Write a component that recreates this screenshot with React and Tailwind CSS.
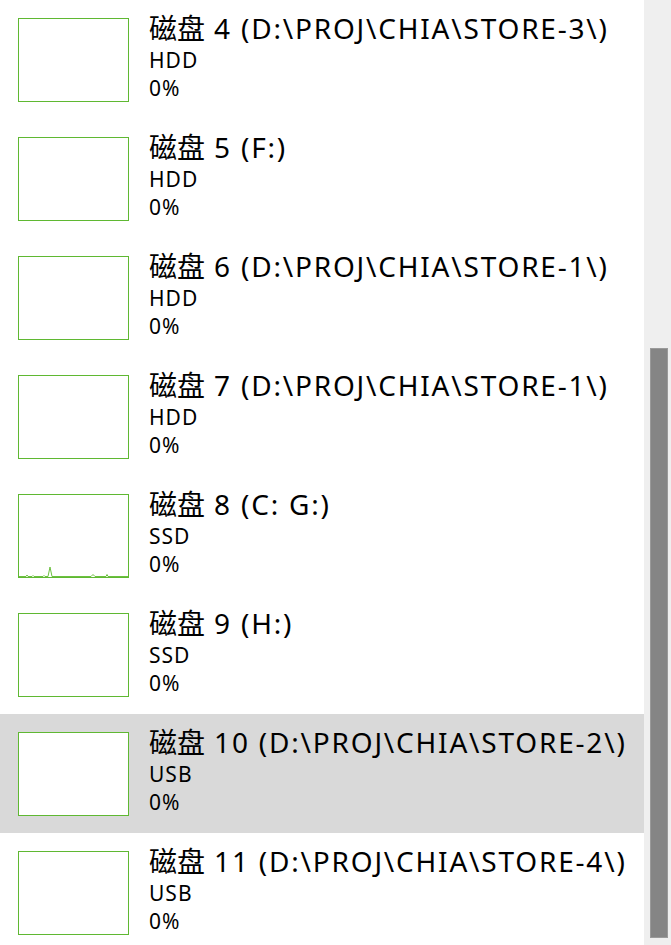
import React from "react";

const disks = [
  { n: 4, label: "D:\\PROJ\\CHIA\\STORE-3\\", type: "HDD" },
  { n: 5, label: "F:", type: "HDD" },
  { n: 6, label: "D:\\PROJ\\CHIA\\STORE-1\\", type: "HDD" },
  { n: 7, label: "D:\\PROJ\\CHIA\\STORE-1\\", type: "HDD" },
  { n: 8, label: "C: G:", type: "SSD", spikes: true },
  { n: 9, label: "H:", type: "SSD" },
  { n: 10, label: "D:\\PROJ\\CHIA\\STORE-2\\", type: "USB", selected: true },
  { n: 11, label: "D:\\PROJ\\CHIA\\STORE-4\\", type: "USB" },
];

function Graph({ spikes }) {
  return (
    <div className="w-[111px] h-[84px] border border-[#5fb832] bg-white shrink-0">
      {spikes && (
        <svg width="109" height="82" viewBox="0 0 109 82" className="block">
          <polyline
            fill="none"
            stroke="#6cc040"
            strokeWidth="1"
            points="0,81.5 7,81.5 8,80 9,81.5 13,81.5 14,80.5 15,81.5 24,81.5 25,80.5 26,81.5 29,81.5 31,72 33,81.5 72,81.5 74,79.5 76,81.5 87,81.5 88,79.5 89,81.5 109,81.5"
          />
        </svg>
      )}
    </div>
  );
}

function DiskRow({ disk }) {
  return (
    <div
      className={`h-[119px] shrink-0 flex items-start pl-[18px] pt-[18px] ${
        disk.selected ? "bg-[#d9d9d9]" : ""
      }`}
    >
      <Graph spikes={disk.spikes} />
      <div className="ml-[20px] -mt-[8px] text-black">
        <div className="text-[28px] leading-[36px] whitespace-nowrap">
          磁盘
          <span className="tracking-[1.8px]">
            {" "}
            {disk.n} ({disk.label})
          </span>
        </div>
        <div className="text-[21px] leading-[28px] tracking-[1px]">{disk.type}</div>
        <div className="text-[21px] leading-[28px] tracking-[1px]">0%</div>
      </div>
    </div>
  );
}

export default function App() {
  return (
    <div
      className="w-[671px] h-[945px] bg-white flex overflow-hidden"
      style={{ fontFamily: '"Noto Sans", "Noto Sans CJK SC", sans-serif' }}
    >
      <div className="w-[644px] flex flex-col">
        {disks.map((d) => (
          <DiskRow key={d.n} disk={d} />
        ))}
      </div>
      <div className="w-[27px] h-full bg-[#efefef] flex flex-col pl-[6px] pr-[3px]">
        <div className="h-[348px] shrink-0" />
        <div className="flex-1 mb-[7px] bg-[#858585] border border-[#9a9a9a]" />
      </div>
    </div>
  );
}
